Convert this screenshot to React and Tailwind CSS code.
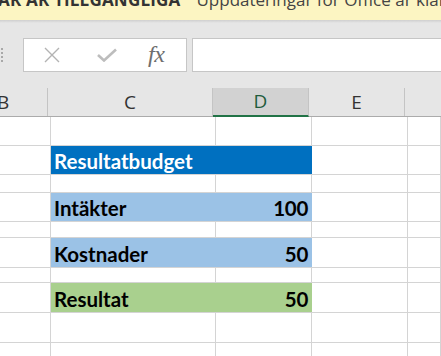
import React from 'react';

const rows = [
  { h: 'h-[29px]' },
  { h: 'h-[29px]', label: 'Resultatbudget', fill: 'bg-[#0070c0]', text: 'text-white' },
  { h: 'h-[18px]' },
  { h: 'h-[29px]', label: 'Intäkter', value: '100', fill: 'bg-[#9bc2e6]', text: 'text-black' },
  { h: 'h-[16px]' },
  { h: 'h-[30px]', label: 'Kostnader', value: '50', fill: 'bg-[#9bc2e6]', text: 'text-black' },
  { h: 'h-[15px]' },
  { h: 'h-[30px]', label: 'Resultat', value: '50', fill: 'bg-[#a9d08e]', text: 'text-black' },
  { h: 'h-[30px]' },
  { h: 'h-[30px]' },
];

function SheetRow({ row }) {
  const line = 'border-b border-r border-[#d4d4d4]';
  return (
    <div className={`flex ${row.h}`}>
      <div className={`w-[51px] shrink-0 ${line}`} />
      {row.label ? (
        <div
          className={`w-[261px] shrink-0 flex items-end justify-between pl-[3px] pr-[4px] pb-[3px] ${row.fill} ${row.text} border-b border-[#d4d4d4] font-['Lato'] font-bold text-[20.5px] leading-none`}
        >
          <span>{row.label}</span>
          {row.value && <span className="tracking-[-0.3px]">{row.value}</span>}
        </div>
      ) : (
        <>
          <div className={`w-[165px] shrink-0 ${line}`} />
          <div className={`w-[96px] shrink-0 ${line}`} />
        </>
      )}
      <div className={`w-[96px] shrink-0 ${line}`} />
      <div className={`flex-1 ${line}`} />
    </div>
  );
}

export default function App() {
  return (
    <div className="w-[441px] h-[356px] overflow-hidden bg-white font-['Open_Sans',sans-serif]">
      {/* message bar */}
      <div className="h-[20px] bg-[#fcf5c2] overflow-hidden whitespace-nowrap">
        <div className="-mt-[12px] text-[17px] leading-[24px] text-[#333] -ml-[2px]">
          <span className="font-bold tracking-[0.2px]">AR ÄR TILLGÄNGLIGA</span>
          <span className="ml-[16px] text-[#444]">Uppdateringar för Office är klara att installeras</span>
        </div>
      </div>
      <div className="h-[3px] bg-gradient-to-b from-[#cfcfcf] to-[#e6e6e6]" />

      {/* formula bar */}
      <div className="h-[65px] bg-[#e6e6e6] flex pt-[15px]">
        <div className="w-[23px] flex justify-start pt-[10px]">
          <div className="flex flex-col gap-[2px] pl-[1px]">
            <span className="w-[2px] h-[2px] bg-[#a8a8a8]" />
            <span className="w-[2px] h-[2px] bg-[#a8a8a8]" />
            <span className="w-[2px] h-[2px] bg-[#a8a8a8]" />
            <span className="w-[2px] h-[2px] bg-[#a8a8a8]" />
          </div>
        </div>
        <div className="w-[164px] h-[34px] bg-white border border-[#c6c6c6] flex items-center">
          <svg className="ml-[19px]" width="18" height="18" viewBox="0 0 18 18">
            <path d="M2 2 L16 16 M16 2 L2 16" stroke="#b3b3b3" strokeWidth="1.4" />
          </svg>
          <svg className="ml-[36px]" width="20" height="14" viewBox="0 0 20 14">
            <path d="M1 7 L7 12.5 L19 1.5" stroke="#bdbdbd" strokeWidth="2.6" fill="none" />
          </svg>
          <span className="ml-[31px] font-['Liberation_Serif',serif] italic text-[24px] text-[#6e6e6e] leading-none -mt-[3px] tracking-[-0.5px]">
            fx
          </span>
        </div>
        <div className="ml-[5px] flex-1 h-[34px] bg-white border border-[#c6c6c6] border-r-0" />
      </div>

      {/* column headers */}
      <div className="h-[29px] flex bg-[#e6e6e6] border-b border-[#ababab] text-[19px] leading-none text-[#333]">
        <div className="w-[51px] shrink-0 border-r border-[#c4c4c4] flex items-center -ml-[3px]">B</div>
        <div className="w-[165px] shrink-0 border-r border-[#c4c4c4] flex items-center justify-center">C</div>
        <div className="w-[96px] shrink-0 bg-[#d2d2d2] border-r border-[#c4c4c4] border-b-2 border-b-[#217346] -mb-[1px] flex items-center justify-center text-[#1f5c3c]">
          D
        </div>
        <div className="w-[96px] shrink-0 border-r border-[#c4c4c4] flex items-center justify-center">E</div>
        <div className="flex-1" />
      </div>

      {/* cells */}
      {rows.map((row, i) => (
        <SheetRow key={i} row={row} />
      ))}
    </div>
  );
}
